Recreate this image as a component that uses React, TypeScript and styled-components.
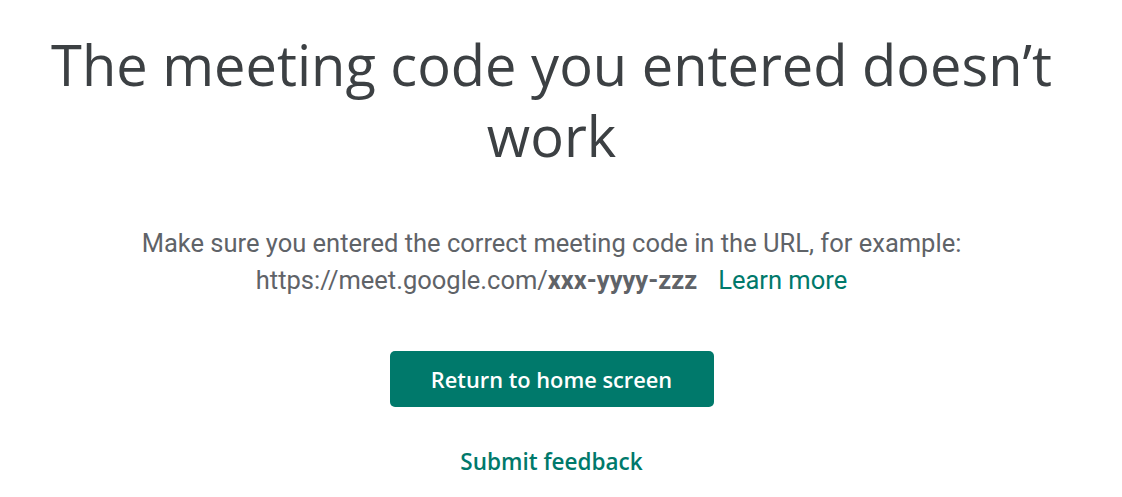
import React from "react";
import styled, { createGlobalStyle } from "styled-components";

const GlobalStyle = createGlobalStyle`
  html, body {
    margin: 0;
    padding: 0;
    background: #ffffff;
  }
  body {
    font-family: Roboto, "Liberation Sans", Arial, sans-serif;
  }
`;

const Page = styled.main`
  width: 1103px;
  display: flex;
  flex-direction: column;
  align-items: center;
  text-align: center;
  padding-top: 29px;
`;

const Title = styled.h1`
  margin: 0;
  width: 1080px;
  font-family: "Open Sans", Roboto, sans-serif;
  font-weight: 400;
  font-size: 56px;
  line-height: 71px;
  color: #3c4043;
`;

const Message = styled.p`
  margin: 54px 0 0;
  font-family: Roboto, "Liberation Sans", sans-serif;
  font-size: 25.5px;
  line-height: 37px;
  color: #5f6368;
`;

const Code = styled.b`
  font-weight: 700;
`;

const InlineLink = styled.a`
  margin-left: 21px;
  color: #00796b;
  text-decoration: none;
`;

const PrimaryButton = styled.button`
  margin-top: 52px;
  width: 324px;
  height: 56px;
  border: none;
  border-radius: 5px;
  background: #00796b;
  color: #ffffff;
  font-family: "Open Sans", Roboto, sans-serif;
  font-weight: 600;
  font-size: 21.8px;
  cursor: pointer;
`;

const TextButton = styled.a`
  margin-top: 39px;
  color: #00796b;
  font-family: "Open Sans", Roboto, sans-serif;
  font-weight: 600;
  font-size: 22.5px;
  text-decoration: none;
`;

export default function App() {
  return (
    <>
      <GlobalStyle />
      <Page>
        <Title>The meeting code you entered doesn’t work</Title>
        <Message>
          Make sure you entered the correct meeting code in the URL, for example:
          <br />
          https://meet.google.com/<Code>xxx-yyyy-zzz</Code>
          <InlineLink href="#">Learn more</InlineLink>
        </Message>
        <PrimaryButton>Return to home screen</PrimaryButton>
        <TextButton href="#">Submit feedback</TextButton>
      </Page>
    </>
  );
}
